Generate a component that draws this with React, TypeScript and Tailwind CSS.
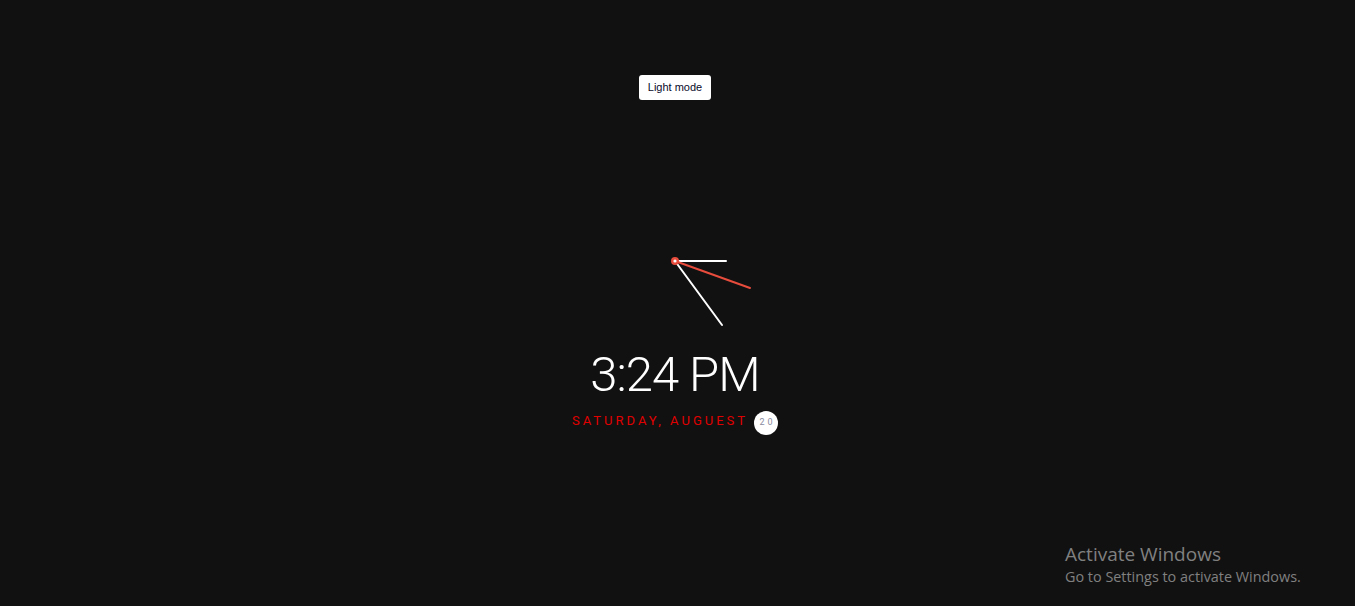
import React from "react";

export default function App() {
  const cx = 100;
  const cy = 100;
  return (
    <div className="relative min-h-[606px] w-full overflow-hidden bg-[#111111]" style={{ fontFamily: "Roboto, 'Liberation Sans', sans-serif" }}>
      <div className="flex w-[1350px] flex-col items-center">
        <button className="mt-[75px] h-[25px] rounded-[3px] bg-white px-[9px] text-[11px] text-[#0a0a2a]" style={{ fontFamily: "'Liberation Sans', Arial, sans-serif" }}>
          Light mode
        </button>
        <svg width="200" height="189" viewBox="0 0 200 189" className="mt-[61px] block">
          <line x1={cx} y1={cy} x2={cx + 51} y2={cy} stroke="#ffffff" strokeWidth="2" strokeLinecap="round" />
          <line x1={cx} y1={cy} x2={cx + 47} y2={cy + 64} stroke="#ffffff" strokeWidth="2" strokeLinecap="round" />
          <line x1={cx} y1={cy} x2={cx + 75} y2={cy + 27} stroke="#e74c3c" strokeWidth="2" strokeLinecap="round" />
          <circle cx={cx} cy={cy} r="4" fill="#e74c3c" />
          <circle cx={cx} cy={cy} r="1.6" fill="#ffffff" />
        </svg>
        <div className="h-[49px] text-[49px] leading-[49px] font-light tracking-[-1px] text-white">3:24 PM</div>
        <div className="mt-[12px] flex items-center">
          <span className="mb-[5px] text-[13px] leading-[15px] tracking-[3px] text-[#e00000]">SATURDAY, AUGUEST</span>
          <span className="ml-[6px] flex h-[24px] w-[24px] items-center justify-center rounded-full bg-white pl-[3px] text-[9px] tracking-[3px] text-[#8a8aa0]">
            20
          </span>
        </div>
      </div>
      <div className="absolute left-[1065px] top-[541px] text-[#808080]" style={{ fontFamily: "'Open Sans', 'Noto Sans', sans-serif" }}>
        <div className="text-[19px] leading-[26px]">Activate Windows</div>
        <div className="text-[14.4px] leading-[20px]">Go to Settings to activate Windows.</div>
      </div>
    </div>
  );
}
